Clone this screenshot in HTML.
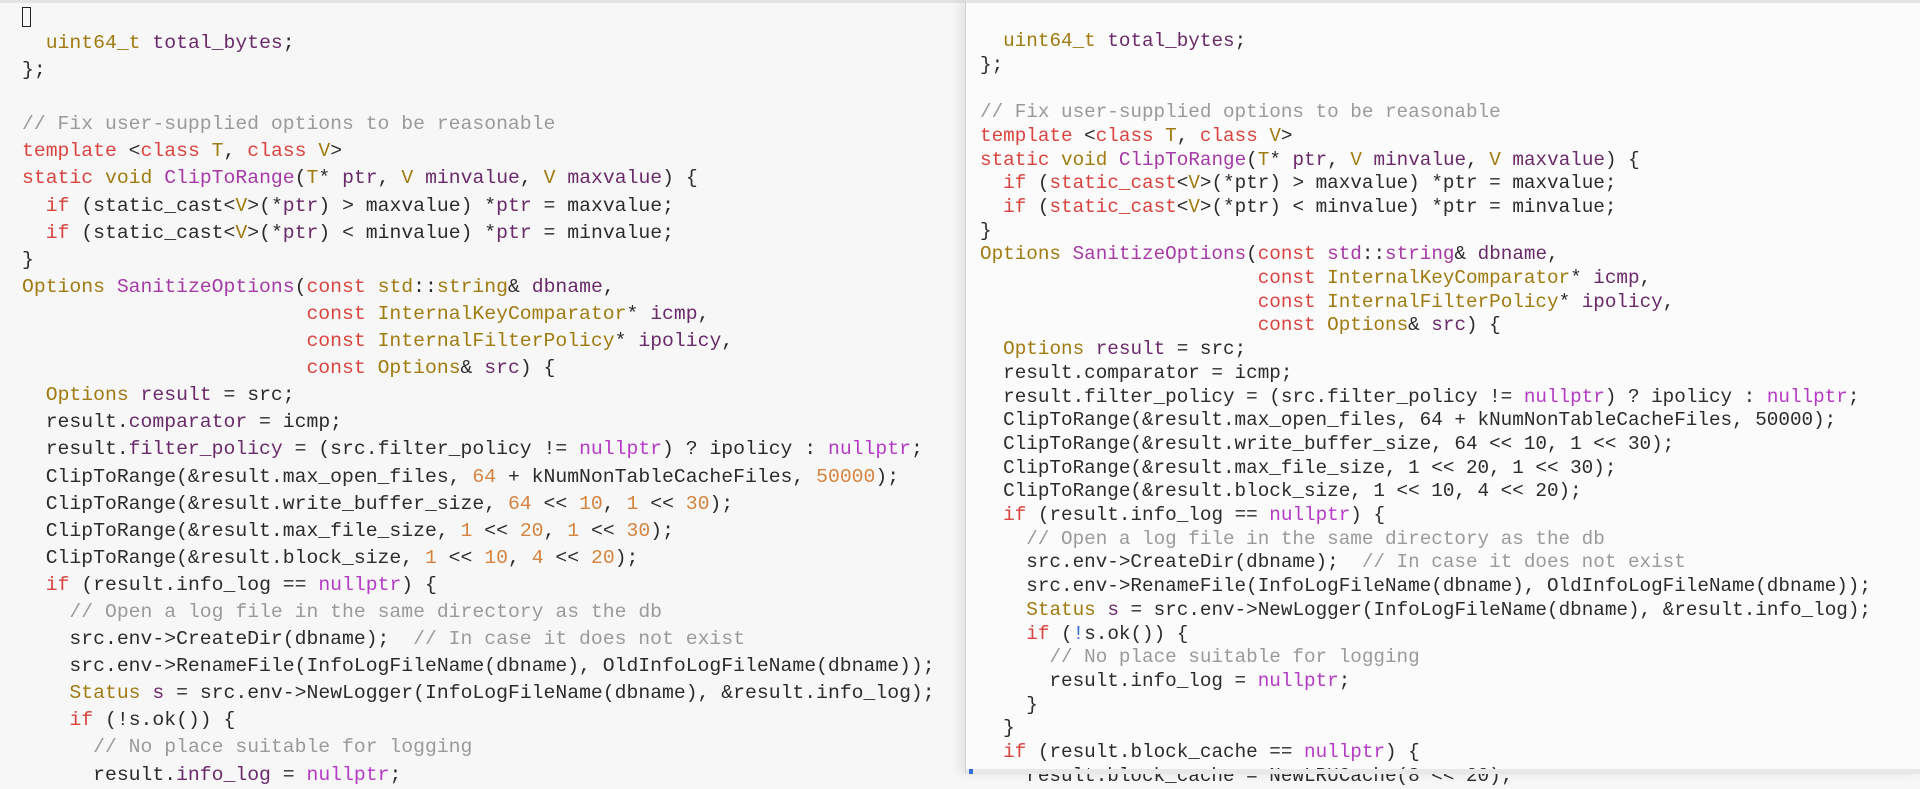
<!DOCTYPE html>
<html><head><meta charset="utf-8"><style>
html,body{margin:0;padding:0;width:1920px;height:774px;overflow:hidden;background:#f7f7f7;}
.l{position:absolute;left:0;top:0;width:965px;height:774px;background:#f7f7f8;border-top:3px solid #e3e3e3;box-sizing:border-box;}
.r{position:absolute;left:965px;top:0;width:955px;height:774px;background:#fbfbfb;border-left:1px solid #d0d0d0;box-shadow:-6px 0 10px rgba(0,0,0,0.08);border-top:3px solid #e3e3e3;box-sizing:border-box;}
pre{margin:0;position:absolute;font-family:"Liberation Mono",monospace;color:#2b2b2b;white-space:pre;}
.l pre{left:22px;top:27px;font-size:19.75px;line-height:27.1px;}
.r pre{left:14px;top:27px;font-size:19.3px;line-height:23.7px;}
.k{color:#d9443f}.t{color:#a07b10}.v{color:#6a2a6a}.f{color:#a63aa6}.c{color:#9a9a9a}.n{color:#d4843e}.np{color:#b43cc4}.b{color:#2f6fd6}
.cur{position:absolute;left:22px;top:4px;width:9px;height:20px;border:1.5px solid #222;box-sizing:border-box;}
.bar{position:absolute;left:0;bottom:0;width:955px;height:5px;background:#e8e8e8}
.bar i{position:absolute;left:3px;top:0;width:4px;height:5px;background:#2f6fd6}
</style></head><body>
<div class="l"><div class="cur"></div><pre>
  <span class="t">uint64_t</span> <span class="v">total_bytes</span>;
};

<span class="c">// Fix user-supplied options to be reasonable</span>
<span class="k">template</span> &lt;<span class="k">class</span> <span class="t">T</span>, <span class="k">class</span> <span class="t">V</span>&gt;
<span class="k">static</span> <span class="t">void</span> <span class="f">ClipToRange</span>(<span class="t">T</span>* <span class="v">ptr</span>, <span class="t">V</span> <span class="v">minvalue</span>, <span class="t">V</span> <span class="v">maxvalue</span>) {
  <span class="k">if</span> (static_cast&lt;<span class="t">V</span>&gt;(*<span class="v">ptr</span>) &gt; maxvalue) *<span class="v">ptr</span> = maxvalue;
  <span class="k">if</span> (static_cast&lt;<span class="t">V</span>&gt;(*<span class="v">ptr</span>) &lt; minvalue) *<span class="v">ptr</span> = minvalue;
}
<span class="t">Options</span> <span class="f">SanitizeOptions</span>(<span class="k">const</span> <span class="t">std</span>::<span class="t">string</span>&amp; <span class="v">dbname</span>,
                        <span class="k">const</span> <span class="t">InternalKeyComparator</span>* <span class="v">icmp</span>,
                        <span class="k">const</span> <span class="t">InternalFilterPolicy</span>* <span class="v">ipolicy</span>,
                        <span class="k">const</span> <span class="t">Options</span>&amp; <span class="v">src</span>) {
  <span class="t">Options</span> <span class="v">result</span> = src;
  result.<span class="v">comparator</span> = icmp;
  result.<span class="v">filter_policy</span> = (src.filter_policy != <span class="np">nullptr</span>) ? ipolicy : <span class="np">nullptr</span>;
  ClipToRange(&amp;result.max_open_files, <span class="n">64</span> + kNumNonTableCacheFiles, <span class="n">50000</span>);
  ClipToRange(&amp;result.write_buffer_size, <span class="n">64</span> &lt;&lt; <span class="n">10</span>, <span class="n">1</span> &lt;&lt; <span class="n">30</span>);
  ClipToRange(&amp;result.max_file_size, <span class="n">1</span> &lt;&lt; <span class="n">20</span>, <span class="n">1</span> &lt;&lt; <span class="n">30</span>);
  ClipToRange(&amp;result.block_size, <span class="n">1</span> &lt;&lt; <span class="n">10</span>, <span class="n">4</span> &lt;&lt; <span class="n">20</span>);
  <span class="k">if</span> (result.info_log == <span class="np">nullptr</span>) {
    <span class="c">// Open a log file in the same directory as the db</span>
    src.env-&gt;CreateDir(dbname);  <span class="c">// In case it does not exist</span>
    src.env-&gt;RenameFile(InfoLogFileName(dbname), OldInfoLogFileName(dbname));
    <span class="t">Status</span> <span class="v">s</span> = src.env-&gt;NewLogger(InfoLogFileName(dbname), &amp;result.info_log);
    <span class="k">if</span> (!s.ok()) {
      <span class="c">// No place suitable for logging</span>
      result.<span class="v">info_log</span> = <span class="np">nullptr</span>;
</pre></div>
<div class="r"><pre>
  <span class="t">uint64_t</span> <span class="v">total_bytes</span>;
};

<span class="c">// Fix user-supplied options to be reasonable</span>
<span class="k">template</span> &lt;<span class="k">class</span> <span class="t">T</span>, <span class="k">class</span> <span class="t">V</span>&gt;
<span class="k">static</span> <span class="t">void</span> <span class="f">ClipToRange</span>(<span class="t">T</span>* <span class="v">ptr</span>, <span class="t">V</span> <span class="v">minvalue</span>, <span class="t">V</span> <span class="v">maxvalue</span>) {
  <span class="k">if</span> (<span class="k">static_cast</span>&lt;<span class="t">V</span>&gt;(*ptr) &gt; maxvalue) *ptr = maxvalue;
  <span class="k">if</span> (<span class="k">static_cast</span>&lt;<span class="t">V</span>&gt;(*ptr) &lt; minvalue) *ptr = minvalue;
}
<span class="t">Options</span> <span class="f">SanitizeOptions</span>(<span class="k">const</span> <span class="f">std</span>::<span class="f">string</span>&amp; <span class="v">dbname</span>,
                        <span class="k">const</span> <span class="t">InternalKeyComparator</span>* <span class="v">icmp</span>,
                        <span class="k">const</span> <span class="t">InternalFilterPolicy</span>* <span class="v">ipolicy</span>,
                        <span class="k">const</span> <span class="t">Options</span>&amp; <span class="v">src</span>) {
  <span class="t">Options</span> <span class="v">result</span> = src;
  result.comparator = icmp;
  result.filter_policy = (src.filter_policy != <span class="np">nullptr</span>) ? ipolicy : <span class="np">nullptr</span>;
  ClipToRange(&amp;result.max_open_files, 64 + kNumNonTableCacheFiles, 50000);
  ClipToRange(&amp;result.write_buffer_size, 64 &lt;&lt; 10, 1 &lt;&lt; 30);
  ClipToRange(&amp;result.max_file_size, 1 &lt;&lt; 20, 1 &lt;&lt; 30);
  ClipToRange(&amp;result.block_size, 1 &lt;&lt; 10, 4 &lt;&lt; 20);
  <span class="k">if</span> (result.info_log == <span class="np">nullptr</span>) {
    <span class="c">// Open a log file in the same directory as the db</span>
    src.env-&gt;CreateDir(dbname);  <span class="c">// In case it does not exist</span>
    src.env-&gt;RenameFile(InfoLogFileName(dbname), OldInfoLogFileName(dbname));
    <span class="t">Status</span> <span class="v">s</span> = src.env-&gt;NewLogger(InfoLogFileName(dbname), &amp;result.info_log);
    <span class="k">if</span> (<span class="b">!</span>s.ok()) {
      <span class="c">// No place suitable for logging</span>
      result.info_log = <span class="np">nullptr</span>;
    }
  }
  <span class="k">if</span> (result.block_cache == <span class="np">nullptr</span>) {
    result.block_cache = NewLRUCache(8 &lt;&lt; 20);
</pre><div class="bar"><i></i></div></div>
</body></html>
